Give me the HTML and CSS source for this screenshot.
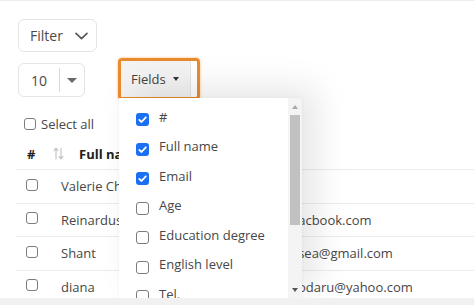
FILE: index.html
```html
<!DOCTYPE html>
<html lang="en">
<head>
<meta charset="utf-8">
<title>Fields selector</title>
<link rel="stylesheet" href="styles.css">
</head>
<body>
<div class="frame">
  <div class="main">
    <button class="filter" type="button">
      <span>Filter</span>
      <svg class="chev" width="13" height="8" viewBox="0 0 13 8"><path d="M1 1.3 L6.5 6.6 L12 1.3" fill="none" stroke="#555" stroke-width="1.6" stroke-linecap="round" stroke-linejoin="round"/></svg>
    </button>

    <div class="controls">
      <div class="pagesize">
        <span class="ps-val">10</span>
        <span class="ps-div"></span>
        <span class="caret caret-gray"></span>
      </div>

      <div class="fields-hl">
        <div class="fields-btn">Fields <span class="caret caret-dark"></span></div>
        <div class="menu">
          <ul class="menu-list">
            <li><span class="cb checked"><svg width="13" height="13" viewBox="0 0 13 13"><path d="M3.3 6.9 L5.5 9 L9.8 4.3" fill="none" stroke="#fff" stroke-width="1.8" stroke-linecap="round" stroke-linejoin="round"/></svg></span>#</li>
            <li><span class="cb checked"><svg width="13" height="13" viewBox="0 0 13 13"><path d="M3.3 6.9 L5.5 9 L9.8 4.3" fill="none" stroke="#fff" stroke-width="1.8" stroke-linecap="round" stroke-linejoin="round"/></svg></span>Full name</li>
            <li><span class="cb checked"><svg width="13" height="13" viewBox="0 0 13 13"><path d="M3.3 6.9 L5.5 9 L9.8 4.3" fill="none" stroke="#fff" stroke-width="1.8" stroke-linecap="round" stroke-linejoin="round"/></svg></span>Email</li>
            <li><span class="cb"></span>Age</li>
            <li><span class="cb"></span>Education degree</li>
            <li><span class="cb"></span>English level</li>
            <li><span class="cb"></span>Tel.</li>
          </ul>
          <div class="sb">
            <span class="sb-up"></span>
            <span class="sb-thumb"></span>
            <span class="sb-space"></span>
            <span class="sb-down"></span>
          </div>
        </div>
      </div>
    </div>

    <label class="selectall"><span class="cb small"></span>Select all</label>

    <div class="table">
      <div class="thead">
        <span class="th-hash">#</span>
        <span class="th-sort"><svg width="11" height="13" viewBox="0 0 11 13"><path d="M3 12 V1.2 M1 3.6 L3 1.2 L5 3.6 M8 1 V11.8 M6 9.4 L8 11.8 L10 9.4" fill="none" stroke="#c2c2c2" stroke-width="1.1" stroke-linecap="round" stroke-linejoin="round"/></svg></span>
        <span class="th-name">Full name</span>
      </div>
      <div class="row"><span class="cell-cb"><span class="cb small"></span></span><span class="cell-name">Valerie Chen</span><span class="cell-email"></span></div>
      <div class="row"><span class="cell-cb"><span class="cb small"></span></span><span class="cell-name">Reinardus</span><span class="cell-email">reinardus@macbook.com</span></div>
      <div class="row"><span class="cell-cb"><span class="cb small"></span></span><span class="cell-name">Shant</span><span class="cell-email">shant.mitchelsea@gmail.com</span></div>
      <div class="row"><span class="cell-cb"><span class="cb small"></span></span><span class="cell-name">diana</span><span class="cell-email">diana.ioana.podaru@yahoo.com</span></div>
    </div>
  </div>
  <div class="strip"></div>
</div>
</body>
</html>
```
FILE: styles.css
```css
html, body {
  margin: 0;
  padding: 0;
}
body {
  width: 474px;
  height: 305px;
  overflow: hidden;
  background: #fff;
  font-family: "Open Sans", "Liberation Sans", sans-serif;
  font-size: 13px;
  color: #474747;
}
.frame {
  height: 305px;
  display: flex;
  flex-direction: column;
}
.main {
  height: 298px;
  box-sizing: border-box;
  border-top: 1px solid #ececec;
  overflow: hidden;
  position: relative;
}
.strip {
  height: 7px;
  background: #f1f1f1;
}

/* Filter */
.filter {
  margin: 18px 0 0 18px;
  width: 79px;
  height: 33px;
  box-sizing: border-box;
  border: 1px solid #e5e5e5;
  border-radius: 6px;
  background: #fff;
  display: flex;
  align-items: center;
  gap: 12px;
  padding: 0 0 0 11px;
  font-family: inherit;
  font-size: 14px;
  color: #4a4a4a;
}

/* Controls row */
.controls {
  display: flex;
  align-items: flex-end;
  margin: 6px 0 0 18px;
}
.pagesize {
  width: 67px;
  height: 34px;
  box-sizing: border-box;
  border: 1px solid #e5e5e5;
  border-radius: 6px;
  display: flex;
  align-items: center;
  margin-bottom: 3px;
}
.ps-val {
  width: 40px;
  box-sizing: border-box;
  padding-left: 12px;
  font-size: 14px;
  color: #4a4a4a;
}
.ps-div {
  width: 1px;
  height: 24px;
  background: #d6d6d6;
}
.caret {
  display: inline-block;
  width: 0;
  height: 0;
  border-left: 5px solid transparent;
  border-right: 5px solid transparent;
  border-top: 5px solid #666;
}
.caret-gray {
  margin-left: 7px;
  border-top-color: #6a6a6a;
}
.caret-dark {
  border-left-width: 3.5px;
  border-right-width: 3.5px;
  border-top-width: 4px;
  border-top-color: #333;
}

.fields-hl {
  margin-left: 33px;
  border: 3px solid #e98b2d;
  border-radius: 4px;
  padding: 0 6px 0 0;
  position: relative;
  box-shadow: 0 0 3px rgba(233, 139, 45, 0.55);
}
.fields-btn {
  width: 70px;
  height: 36px;
  box-sizing: border-box;
  background: #f3f3f3;
  border-right: 1px solid #e3e3e3;
  display: flex;
  align-items: center;
  gap: 7px;
  padding-left: 10px;
  color: #444;
  font-size: 13px;
}

/* Dropdown menu */
.menu {
  position: absolute;
  left: -2px;
  top: 37px;
  width: 183px;
  height: 200px;
  background: #fff;
  display: flex;
  z-index: 2;
  box-shadow: 14px -10px 32px rgba(0, 0, 0, 0.1), 0 0 3px rgba(0, 0, 0, 0.05);
}
.menu-list {
  flex: 1;
  list-style: none;
  margin: 0;
  padding: 4px 0 0 17px;
  overflow: hidden;
}
.menu-list li {
  height: 29.5px;
  display: flex;
  align-items: center;
  gap: 10px;
  color: #474747;
}
.menu-list .cb {
  margin-top: 6px;
}
.cb {
  flex: none;
  width: 13px;
  height: 13px;
  box-sizing: border-box;
  border: 1.2px solid #7c7c7c;
  border-radius: 3px;
  background: #fff;
  display: inline-flex;
}
.cb.checked {
  border: none;
  background: #1b6ff2;
}
.cb.small {
  width: 12px;
  height: 12px;
}

/* Scrollbar */
.sb {
  width: 14px;
  background: #f4f4f4;
  display: flex;
  flex-direction: column;
  align-items: center;
}
.sb-up {
  margin-top: 7px;
  width: 0;
  height: 0;
  border-left: 3.5px solid transparent;
  border-right: 3.5px solid transparent;
  border-bottom: 4px solid #a9a9a9;
}
.sb-thumb {
  margin-top: 6px;
  width: 10px;
  height: 110px;
  background: #c1c1c1;
}
.sb-space {
  flex: 1;
}
.sb-down {
  margin-bottom: 6px;
  width: 0;
  height: 0;
  border-left: 3.5px solid transparent;
  border-right: 3.5px solid transparent;
  border-top: 4px solid #555;
}

/* Select all */
.selectall {
  display: flex;
  align-items: center;
  gap: 5px;
  height: 14px;
  margin: 17px 0 0 24px;
  color: #474747;
}

/* Table */
.table {
  margin: 7px 0 0 16px;
}
.thead {
  display: flex;
  align-items: center;
  height: 31px;
  border-bottom: 1px solid #ececec;
  font-weight: 700;
  color: #222;
}
.th-hash {
  width: 37px;
  box-sizing: border-box;
  padding-left: 11px;
}
.th-sort {
  width: 26px;
  display: flex;
}
.row {
  display: flex;
  align-items: center;
  height: 32.5px;
  border-bottom: 1px solid #ececec;
}
.cell-cb {
  width: 45px;
  box-sizing: border-box;
  padding-left: 10px;
  display: flex;
  margin-top: -3px;
}
.cell-name {
  width: 155px;
}
.cell-email {
  white-space: nowrap;
}
```
